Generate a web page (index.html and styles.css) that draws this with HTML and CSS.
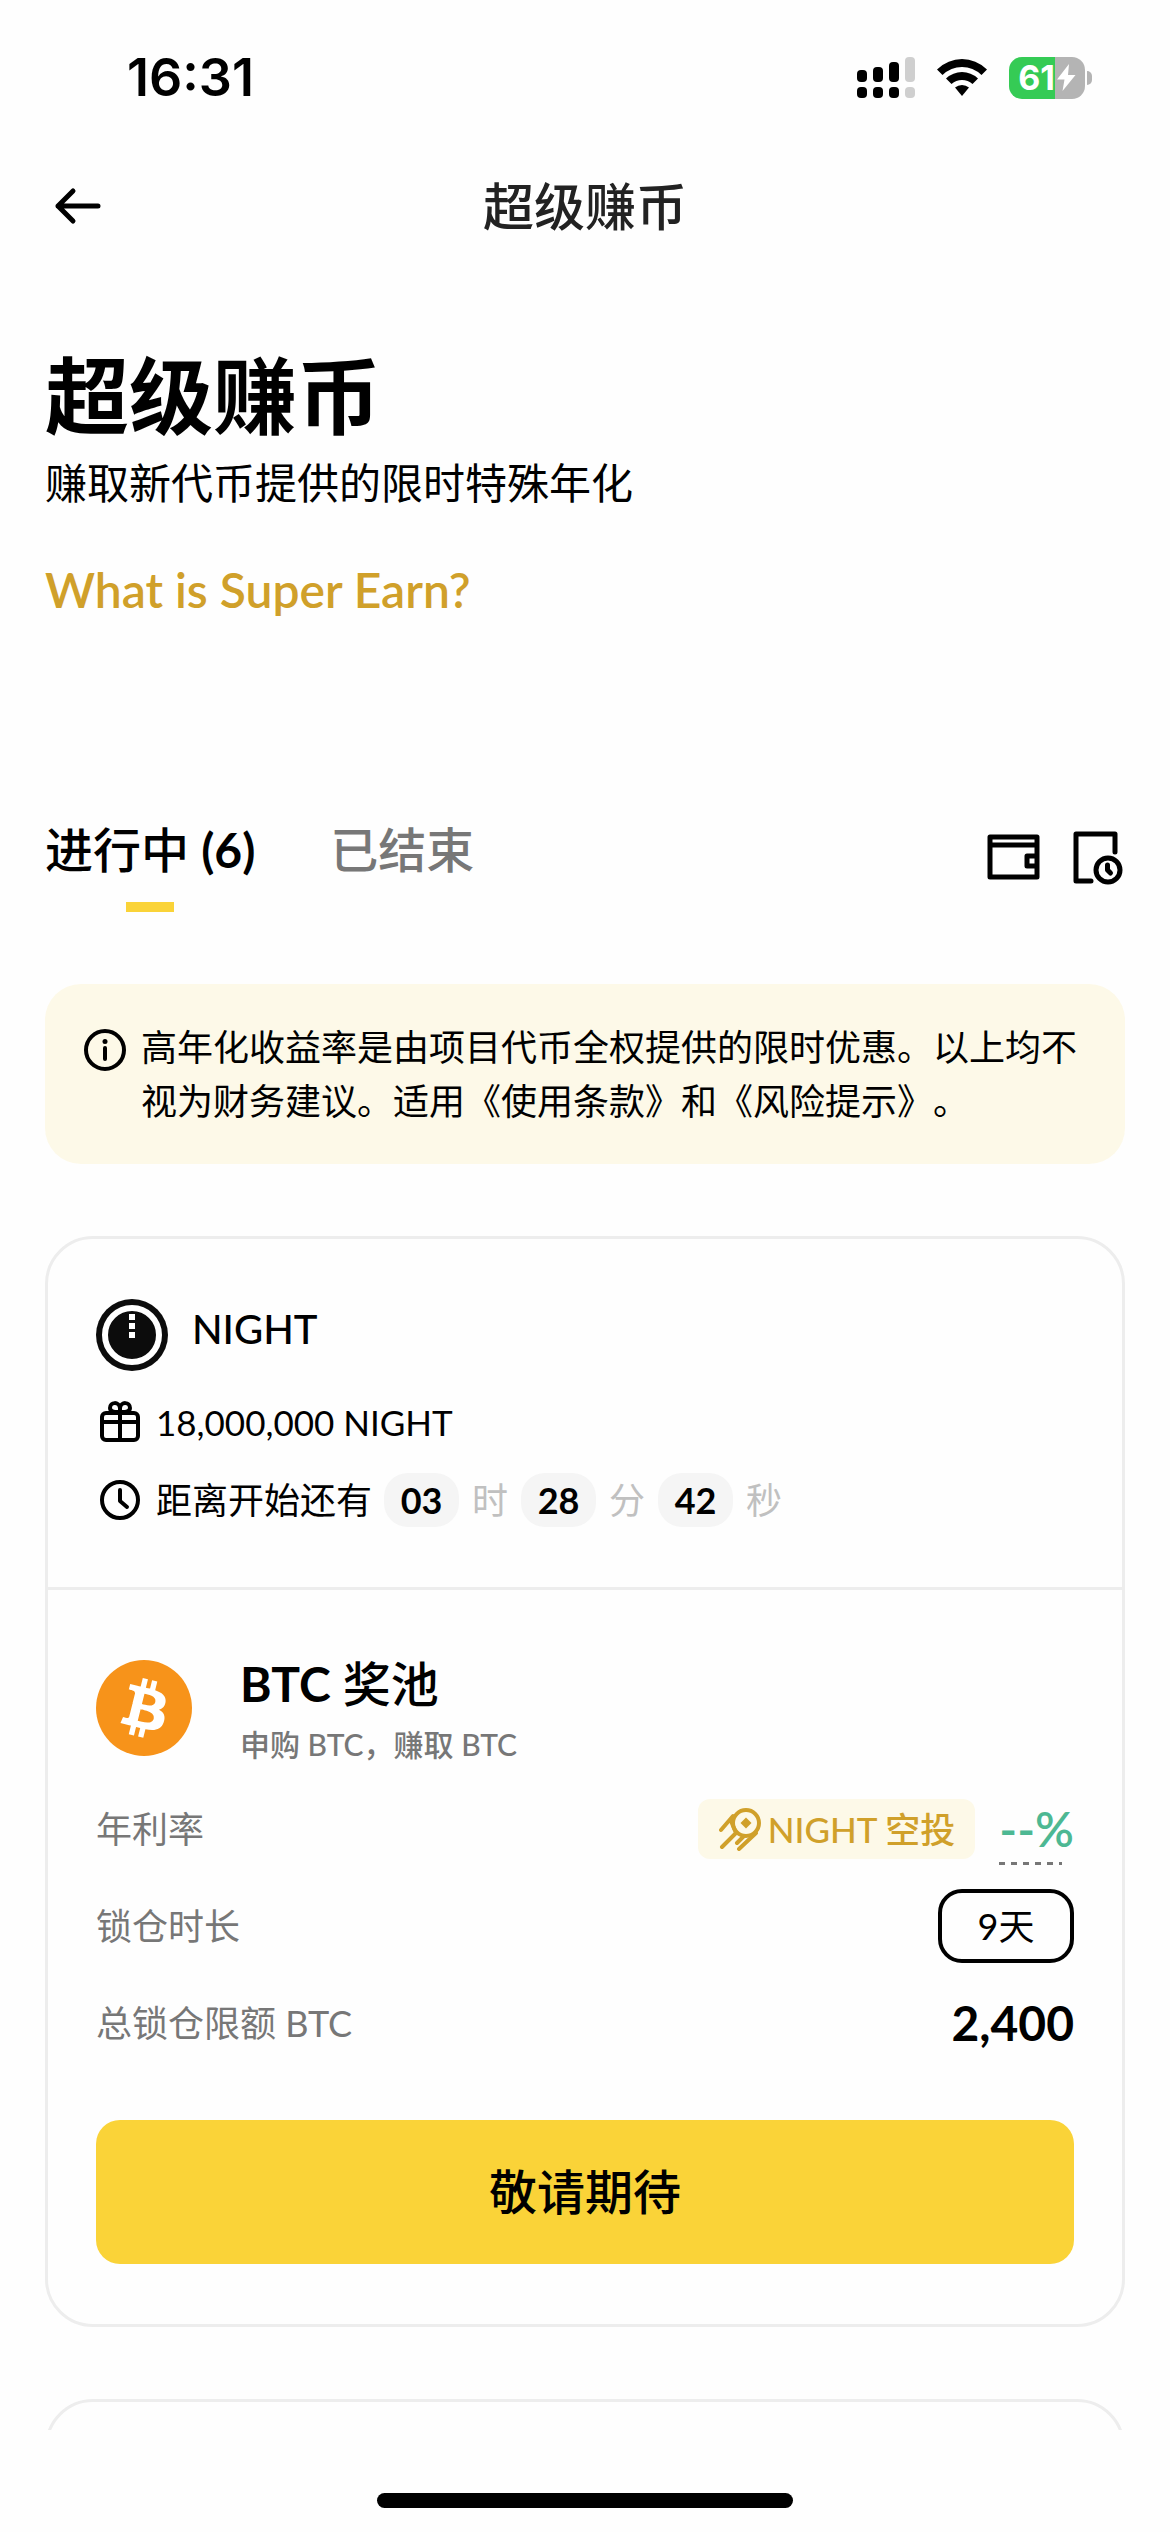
FILE: index.html
```html
<!DOCTYPE html>
<html lang="zh-CN">
<head>
<meta charset="utf-8">
<meta name="viewport" content="width=device-width, initial-scale=1">
<title>超级赚币</title>
<link rel="stylesheet" href="styles.css">
</head>
<body>
<div class="app">
  <div class="status">
    <span class="status-time">16:31</span>
    <div class="status-icons">
      <svg class="signal" width="58" height="42" viewBox="0 0 58 42" aria-hidden="true">
        <rect x="0" y="13" width="10" height="12" rx="4"/><rect x="16" y="10" width="10" height="15" rx="4"/><rect x="32" y="5" width="10" height="20" rx="4"/><rect class="off" x="48" y="0" width="10" height="25" rx="4"/>
        <rect x="0" y="30" width="10" height="11" rx="4"/><rect x="16" y="30" width="10" height="11" rx="4"/><rect x="32" y="30" width="10" height="11" rx="4"/><rect class="off" x="48" y="30" width="10" height="11" rx="4"/>
      </svg>
      <svg class="wifi" width="50" height="38" viewBox="0 0 50 38" aria-hidden="true">
        <path d="M0 10.500Q11 0 25 0t25 10.500l-5.500 5.500Q36 8 25 8T5.500 16z"/>
        <path d="M9 19.500Q16 13 25 13t16 6.500l-5.500 5.500Q31 21 25 21t-10.500 4z"/>
        <path d="M18 28.500Q21 26 25 26t7 2.500L25 37z"/>
      </svg>
      <div class="battery">
        <span class="battery-level">61</span>
        <svg width="19" height="28" viewBox="0 0 19 28" aria-hidden="true"><path d="M12 0L0 15.500h7.500L5.500 27 18.500 11H11z"/></svg>
      </div>
    </div>
  </div>

  <header class="nav">
    <button class="icon-button" type="button" aria-label="返回">
      <svg width="48" height="48" viewBox="0 0 48 48"><path d="M44 23H4M19 8L4 23l15 15"/></svg>
    </button>
    <h2 class="nav-title">超级赚币</h2>
  </header>

  <main class="content">
    <section class="hero">
      <h1 class="hero-title">超级赚币</h1>
      <p class="hero-text">赚取新代币提供的限时特殊年化</p>
      <a class="hero-link" href="#about">What is Super Earn?</a>
    </section>

    <nav class="tabs">
      <button class="tab tab-active" type="button">进行中 <b>(6)</b></button>
      <button class="tab" type="button">已结束</button>
      <div class="tools">
        <button class="icon-button" type="button" aria-label="钱包">
          <svg width="54" height="54" viewBox="0 0 54 54"><path d="M3 6h47v40H3zM3 14h47M50 25H40v10h10"/></svg>
        </button>
        <button class="icon-button" type="button" aria-label="历史记录">
          <svg width="54" height="54" viewBox="0 0 54 54"><path d="M20 50H5V3h39v18"/><circle cx="37" cy="39" r="12"/><path d="M36.500 34v5l3 3"/></svg>
        </button>
      </div>
    </nav>

    <aside class="notice">
      <svg width="42" height="42" viewBox="0 0 42 42" aria-hidden="true"><circle class="line" cx="21" cy="21" r="19"/><path class="line" d="M21 19v11"/><circle cx="21" cy="12.500" r="2.500"/></svg>
      <p>高年化收益率是由项目代币全权提供的限时优惠。以上均不视为财务建议。适用《使用条款》和《风险提示》。</p>
    </aside>

    <article class="card">
      <div class="card-head">
        <div class="token">
          <svg width="72" height="72" viewBox="0 0 72 72" aria-hidden="true">
            <circle cx="36" cy="36" r="36" fill="#0c0c0c"/><circle cx="36" cy="36" r="27" fill="none" stroke="#fff" stroke-width="6"/>
            <path fill="#fff" d="M33 15h6v6h-6zM33 24h6v6h-6zM33 33h6v6h-6z"/>
          </svg>
          <h3 class="token-name">NIGHT</h3>
        </div>
        <div class="fact">
          <svg class="fact-icon" width="48" height="48" viewBox="0 0 48 48" aria-hidden="true"><rect x="6" y="15" width="36" height="27" rx="4"/><path d="M6 24h36M24 14v28"/><path d="M24 14c-2 0-10 1-10-4 0-6 9-7 10 0zM24 14c2 0 10 1 10-4 0-6-9-7-10 0z"/></svg>
          <span class="amount">18,000,000 NIGHT</span>
        </div>
        <div class="fact">
          <svg class="fact-icon" width="48" height="48" viewBox="0 0 48 48" aria-hidden="true"><circle cx="24" cy="24" r="18"/><path d="M24 14v11l7 6"/></svg>
          <span>距离开始还有</span>
          <div class="timer"><b>03</b><span>时</span><b>28</b><span>分</span><b>42</b><span>秒</span></div>
        </div>
      </div>

      <div class="pool">
        <div class="pool-head">
          <svg width="96" height="96" viewBox="0 0 32 32" aria-hidden="true"><circle cx="16" cy="16" r="16" fill="#f7931a"/><path fill="#fff" d="M23.189 14.020c.314-2.096-1.283-3.223-3.465-3.975l.708-2.840-1.728-.430-.690 2.765c-.454-.114-.920-.220-1.385-.326l.695-2.783L15.596 6l-.708 2.839c-.376-.086-.746-.170-1.104-.260l.002-.009-2.384-.595-.460 1.846s1.283.294 1.256.312c.700.175.826.638.805 1.006l-.806 3.235c.048.012.110.030.180.057l-.183-.045-1.130 4.532c-.086.212-.303.531-.793.410.018.025-1.256-.313-1.256-.313l-.858 1.978 2.250.561c.418.105.828.215 1.231.318l-.715 2.872 1.727.430.708-2.840c.472.127.930.245 1.378.357l-.706 2.828 1.728.430.715-2.866c2.948.558 5.164.333 6.097-2.333.752-2.146-.037-3.385-1.588-4.192 1.130-.260 1.980-1.003 2.207-2.538zm-3.950 5.538c-.533 2.147-4.148.986-5.320.695l.950-3.805c1.172.293 4.929.872 4.370 3.110zm.535-5.569c-.487 1.953-3.495.960-4.470.717l.860-3.450c.975.243 4.118.696 3.610 2.733z"/></svg>
          <div class="pool-text">
            <h3 class="pool-title"><b>BTC</b> 奖池</h3>
            <p class="pool-sub">申购 BTC，赚取 BTC</p>
          </div>
        </div>
        <dl class="rows">
          <div class="row">
            <dt>年利率</dt>
            <dd>
              <span class="badge">
                <svg width="44" height="44" viewBox="0 0 44 44" aria-hidden="true"><circle cx="28" cy="16" r="13"/><path d="M15 9L3 23M13 14l5 12L4 40M38 26L21 42M26 29l-7 7"/><path class="solid" d="M28 10.500l5.500 5.500-5.500 5.500-5.500-5.500z"/></svg>
                NIGHT 空投
              </span>
              <span class="rate">--%</span>
            </dd>
          </div>
          <div class="row">
            <dt>锁仓时长</dt>
            <dd><button class="term" type="button">9天</button></dd>
          </div>
          <div class="row">
            <dt>总锁仓限额 BTC</dt>
            <dd class="limit">2,400</dd>
          </div>
        </dl>
        <button class="action" type="button">敬请期待</button>
      </div>
    </article>

    <article class="card card-next"></article>
  </main>

  <footer class="home"><span class="home-bar"></span></footer>
</div>
</body>
</html>
```
FILE: styles.css
```css
* { box-sizing: border-box; margin: 0; padding: 0; }

body {
  background: #fefefe;
  color: #000;
  font-family: Lato, "Noto Sans CJK SC", sans-serif;
  font-size: 36px;
  line-height: 54px;
  text-spacing-trim: space-all;
}

button {
  background: none;
  border: 0;
  color: inherit;
  font: inherit;
  cursor: pointer;
}

svg { display: block; flex: none; }

.app {
  display: flex;
  flex-direction: column;
  height: 100vh;
}

/* status bar */
.status {
  flex: none;
  display: flex;
  align-items: center;
  justify-content: space-between;
  height: 156px;
  padding: 0 79px 0 127px;
}
.status-time { font: 600 52px/60px Inter, sans-serif; }
.status-icons { display: flex; align-items: center; gap: 22px; }
.signal .off { fill: #cfcfcf; }
.battery {
  position: relative;
  display: flex;
  align-items: center;
  justify-content: center;
  gap: 2px;
  width: 76px;
  height: 42px;
  margin-right: 6px;
  border-radius: 13px;
  background: linear-gradient(to right, #35cb55 61%, #b4b4b4 61%);
}
.battery::after {
  content: "";
  position: absolute;
  left: 78px;
  top: 14px;
  width: 5px;
  height: 14px;
  border-radius: 0 6px 6px 0;
  background: #b4b4b4;
}
.battery-level { color: #fff; font: 700 34px/42px Inter, sans-serif; }
.battery svg { fill: #fff; }

/* title bar */
.nav {
  flex: none;
  display: grid;
  grid-template-columns: 48px 1fr 48px;
  align-items: center;
  height: 102px;
  padding: 0 54px;
}
.nav-title {
  color: #222;
  font-size: 51px;
  font-weight: 500;
  line-height: 60px;
  text-align: center;
}
.icon-button svg {
  fill: none;
  stroke: #000;
  stroke-width: 5;
  stroke-linecap: round;
  stroke-linejoin: round;
}

.content {
  flex: 1;
  min-height: 0;
  overflow-y: auto;
  scrollbar-width: none;
  padding: 88px 45px 0;
}

.hero-title { font-size: 84px; font-weight: 700; line-height: 100px; }
.hero-text { margin: 7px 0 47px; font-size: 42px; line-height: 60px; }
.hero-link {
  display: block;
  color: #d0a02a;
  font-size: 48px;
  font-weight: 600;
  line-height: 60px;
  text-decoration: none;
}

/* tabs */
.tabs {
  display: flex;
  gap: 75px;
  margin: 200px 0 72px;
}
.tab {
  padding-bottom: 32px;
  color: #777;
  font-size: 48px;
  font-weight: 500;
  line-height: 60px;
}
.tab-active {
  color: #000;
  background: linear-gradient(#fad338, #fad338) center bottom / 48px 10px no-repeat;
}
.tools { display: flex; gap: 30px; margin-left: auto; padding-top: 11px; }
.tools .icon-button { height: 54px; }

/* notice */
.notice {
  display: flex;
  gap: 15px;
  margin-bottom: 72px;
  padding: 36px 39px;
  border-radius: 36px;
  background: #fdf9e8;
}
.notice svg { margin-top: 9px; }
.notice .line { fill: none; stroke: #000; stroke-width: 4; stroke-linecap: round; }

/* cards */
.card {
  margin-bottom: 72px;
  border: 3px solid #ededed;
  border-radius: 48px;
}
.card-next { min-height: 480px; }
.card-head {
  display: grid;
  gap: 24px;
  padding: 60px 48px;
  border-bottom: 3px solid #ededed;
}
.token { display: flex; gap: 24px; }
.token-name { font-size: 40px; font-weight: 500; line-height: 60px; }
.fact { display: flex; align-items: center; gap: 12px; }
.fact-icon {
  fill: none;
  stroke: #000;
  stroke-width: 4;
  stroke-linecap: round;
  stroke-linejoin: round;
}
.amount { font-size: 35px; }
.timer { display: flex; gap: 13px; color: #c0c0c0; }
.timer b {
  width: 75px;
  border-radius: 24px;
  background: #f5f5f5;
  color: #000;
  font-weight: 700;
  text-align: center;
}

.pool { padding: 64px 48px 60px; }
.pool-head { display: flex; align-items: center; gap: 48px; }
.pool-title { font-size: 48px; font-weight: 500; line-height: 60px; }
.pool-sub {
  margin-top: 12px;
  color: #777;
  font-size: 30px;
  font-weight: 500;
  line-height: 36px;
}
.rows { display: grid; gap: 23px; margin: 30px 0 60px; }
.row { display: flex; align-items: center; justify-content: space-between; height: 74px; }
.row dt { color: #777; }
.row dd { display: flex; align-items: center; gap: 24px; }
.badge {
  display: flex;
  align-items: center;
  gap: 6px;
  height: 60px;
  padding: 0 20px;
  border-radius: 12px;
  background: #fdf9e8;
  color: #d0a02a;
  font-size: 35px;
  font-weight: 500;
}
.badge svg { fill: none; stroke: #d0a02a; stroke-width: 4; stroke-linecap: round; }
.badge .solid { fill: #d0a02a; stroke: none; }
.rate {
  position: relative;
  color: #4db893;
  font-size: 48px;
  font-weight: 600;
}
.rate::after {
  content: "";
  position: absolute;
  left: 0;
  right: 12px;
  top: 60px;
  height: 3px;
  background: repeating-linear-gradient(to right, #777 0 6px, transparent 6px 12px);
}
.term {
  width: 136px;
  height: 74px;
  border: 4px solid #000;
  border-radius: 24px;
}
.row .limit { font-size: 48px; font-weight: 700; }
.action {
  display: block;
  width: 100%;
  height: 144px;
  border-radius: 24px;
  background: #fad338;
  font-size: 48px;
  font-weight: 500;
}

.home {
  flex: none;
  display: flex;
  justify-content: center;
  padding: 63px 0 24px;
}
.home-bar { width: 416px; height: 15px; border-radius: 8px; background: #000; }
```
